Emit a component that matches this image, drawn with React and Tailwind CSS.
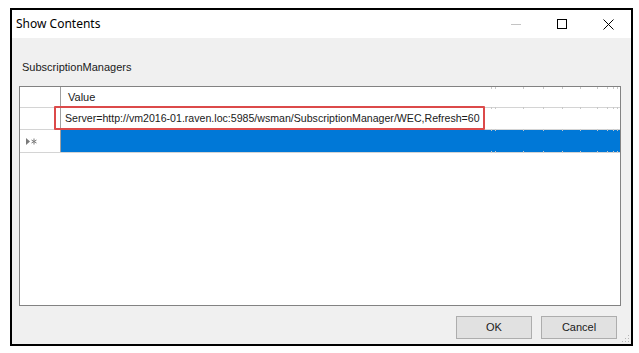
const ticks = [471, 475, 503, 523, 542, 560, 577, 587, 593, 597];
const tickRows = [0, 20, 42, 64];

function CaptionButtons() {
  return (
    <div className="ml-auto flex h-full">
      <div className="w-[46px] h-full flex items-center justify-center">
        <svg width="10" height="10" viewBox="0 0 10 10">
          <line x1="0" y1="5.5" x2="10" y2="5.5" stroke="#c4c4c4" strokeWidth="1" />
        </svg>
      </div>
      <div className="w-[46px] h-full flex items-center justify-center">
        <svg width="10" height="10" viewBox="0 0 10 10">
          <rect x="0.5" y="0.5" width="9" height="9" fill="none" stroke="#000" strokeWidth="1" />
        </svg>
      </div>
      <div className="w-[46px] h-full flex items-center justify-center">
        <svg width="11" height="11" viewBox="0 0 11 11">
          <path d="M0.5 0.5 L10.5 10.5 M10.5 0.5 L0.5 10.5" stroke="#000" strokeWidth="1" />
        </svg>
      </div>
    </div>
  );
}

function NewRowGlyph() {
  return (
    <svg width="11" height="7" viewBox="0 0 11 7">
      <path d="M0 0 L4 3.5 L0 7 Z" fill="#7a7a7a" />
      <path d="M8 0.5 V6.5 M5.5 2 L10.5 5 M10.5 2 L5.5 5" stroke="#7a7a7a" strokeWidth="1" />
    </svg>
  );
}

export default function App() {
  return (
    <div className="pt-[8px] pl-[10px] bg-white min-h-screen">
      <div className="relative w-[623px] h-[338px] border-2 border-black bg-[#f0f0f0] flex flex-col">
        {/* title bar */}
        <div className="h-[28px] bg-white flex items-center shrink-0">
          <span className="pl-[4px] text-[12px] text-black font-['Noto_Sans',sans-serif]">Show Contents</span>
          <CaptionButtons />
        </div>

        {/* body */}
        <div className="flex-1 flex flex-col pl-[7px] pr-[10px] font-['Liberation_Sans',Arial,sans-serif] text-[11px] text-[#1a1a1a]">
          <div className="mt-[22px] pl-[3px] leading-[14px]">SubscriptionManagers</div>

          {/* data grid */}
          <div className="relative mt-[12px] h-[220px] border border-[#828282] bg-white">
            <div className="flex h-[21px] border-b border-[#d4d4d4]">
              <div className="w-[41px] border-r border-[#a0a0a0]" />
              <div className="flex-1 flex items-center pl-[7px]">Value</div>
            </div>
            <div className="flex h-[22px] border-b border-[#d4d4d4]">
              <div className="w-[41px] border-r border-[#a0a0a0]" />
              <div className="flex-1 flex items-center pl-[4px] text-[10.6px]">
                Server=http://vm2016-01.raven.loc:5985/wsman/SubscriptionManager/WEC,Refresh=60
              </div>
            </div>
            <div className="flex h-[23px] border-b border-[#d4d4d4]">
              <div className="w-[41px] border-r border-[#a0a0a0] flex items-center pl-[6px]">
                <NewRowGlyph />
              </div>
              <div className="flex-1 bg-[#0078d7]" />
            </div>

            {/* faint column ticks */}
            {tickRows.map((t) => (
              ticks.map((x) => (
                <span
                  key={`${t}-${x}`}
                  className="absolute w-px h-[2px] bg-[#c8c8c8]"
                  style={{ left: x, top: t }}
                />
              ))
            ))}

            {/* highlight annotation */}
            <div className="absolute left-[34px] top-[19px] w-[431px] h-[24px] border-2 border-[#dc4a4a] rounded-[1px]" />
          </div>

          <div className="mt-[10px] flex justify-end gap-[9px] pr-[4px]">
            <button className="w-[76px] h-[23px] bg-[#e1e1e1] border border-[#adadad] text-[11px]">OK</button>
            <button className="w-[76px] h-[23px] bg-[#e1e1e1] border border-[#adadad] text-[11px]">Cancel</button>
          </div>
        </div>

        {/* size grip */}
        <svg className="absolute right-[1px] bottom-[1px]" width="8" height="8" viewBox="0 0 8 8">
          <rect x="6" y="0" width="1" height="1" fill="#b5b5b5" />
          <rect x="3" y="3" width="1" height="1" fill="#b5b5b5" />
          <rect x="6" y="3" width="1" height="1" fill="#b5b5b5" />
          <rect x="0" y="6" width="1" height="1" fill="#b5b5b5" />
          <rect x="3" y="6" width="1" height="1" fill="#b5b5b5" />
          <rect x="6" y="6" width="1" height="1" fill="#b5b5b5" />
        </svg>
      </div>
    </div>
  );
}
